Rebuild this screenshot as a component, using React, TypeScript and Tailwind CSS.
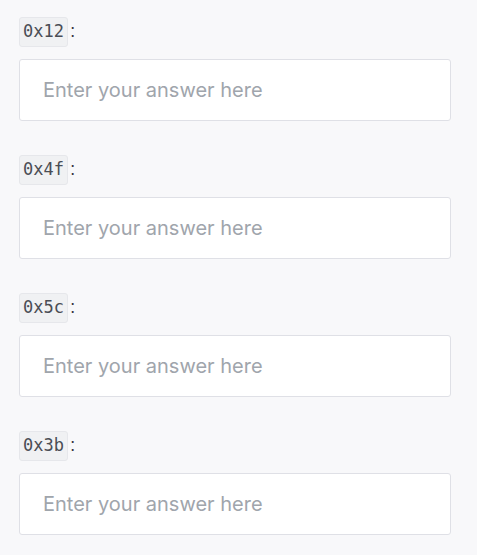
const questions = ["0x12", "0x4f", "0x5c", "0x3b"];

export default function App() {
  return (
    <div className="min-h-[555px] bg-[#f8f8fa] pl-[19px] pr-[26px] pt-[17px] font-['Inter',sans-serif]">
      <div className="flex flex-col gap-[34px]">
        {questions.map((q) => (
          <div key={q} className="flex flex-col gap-3">
            <label className="flex h-[30px] items-center text-[19px] font-light text-[#2d3039]">
              <code className="flex h-[30px] items-center rounded-[3px] border border-[#e6e7eb] bg-[#f0f1f3] px-[3px] font-['DejaVu_Sans_Mono',monospace] text-[17px] font-normal text-[#4a4d55]">
                {q}
              </code>
              <span className="ml-[2px] -mt-[3px] leading-none">:</span>
            </label>
            <input
              type="text"
              placeholder="Enter your answer here"
              className="h-[62px] w-full rounded-[3px] border border-[#dfe0e6] bg-white px-[23px] text-[20px] text-[#2d3039] outline-none placeholder:text-[#a0a5ac]"
            />
          </div>
        ))}
      </div>
    </div>
  );
}
